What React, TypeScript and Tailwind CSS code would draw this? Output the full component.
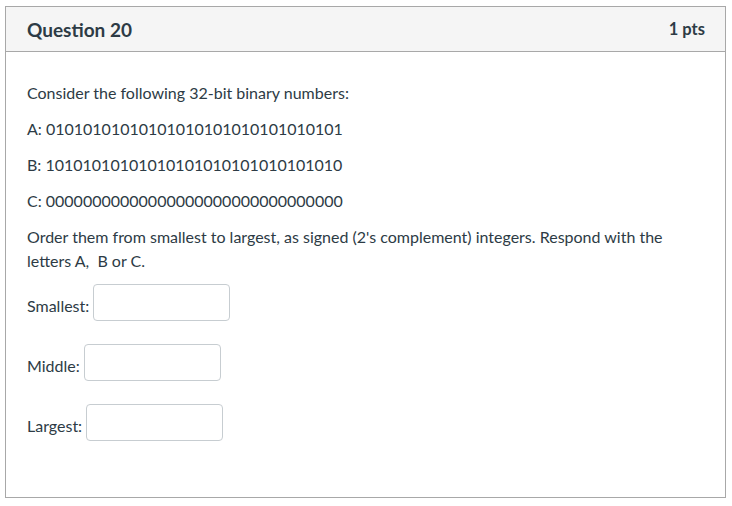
export default function App() {
  const rows = [
    { label: "Smallest:", mt: "mt-[11px]" },
    { label: "Middle:", mt: "mt-[23px]" },
    { label: "Largest:", mt: "mt-[23px]" },
  ];

  return (
    <div
      className="min-h-screen bg-white pl-[5px] pt-[6px] text-[#2d3b45]"
      style={{ fontFamily: "Lato, 'Open Sans', sans-serif" }}
    >
      <div className="w-[721px] h-[492px] border border-[#a8a8a8] flex flex-col">
        {/* header */}
        <div className="h-[45px] shrink-0 bg-[#f5f5f5] border-b border-[#a8a8a8] flex items-center justify-between pl-[21px] pr-[20px]">
          <h2 className="text-[19px] font-bold leading-none">Question 20</h2>
          <span className="text-[16.5px] font-bold text-[#2d3b45]">1 pts</span>
        </div>

        {/* body */}
        <div className="px-[21px] pt-[29px] text-[16px] leading-[24px]">
          <p>Consider the following 32-bit binary numbers:</p>
          <p className="mt-[12px]">A: 01010101010101010101010101010101</p>
          <p className="mt-[12px]">B: 10101010101010101010101010101010</p>
          <p className="mt-[12px]">C: 00000000000000000000000000000000</p>
          <p className="mt-[12px]">
            Order them from smallest to largest, as signed (2's complement)
            integers. Respond with the letters A,&nbsp; B or C.
          </p>

          {rows.map((r) => (
            <div key={r.label} className={`${r.mt} flex items-center gap-[4px]`}>
              <span className="pt-[6px]">{r.label}</span>
              <input
                type="text"
                className="w-[137px] h-[37px] border border-[#c7cdd1] rounded-[4px] bg-white outline-none px-2"
              />
            </div>
          ))}
        </div>
      </div>
    </div>
  );
}
